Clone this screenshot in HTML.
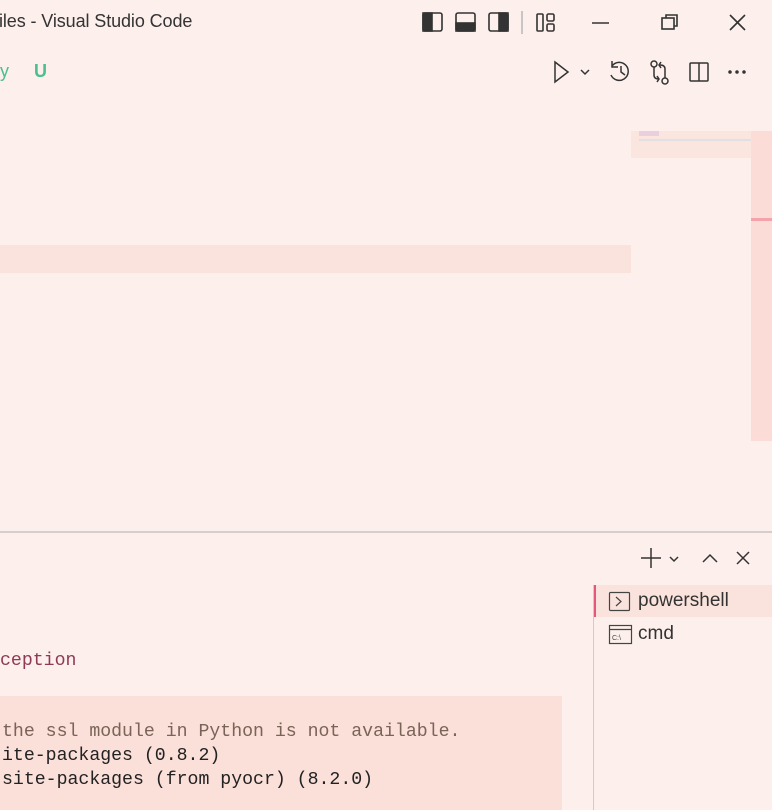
<!DOCTYPE html>
<html><head><style>
body{margin:0;width:772px;height:810px;background:#fdefeb;position:relative;overflow:hidden;font-family:"Segoe UI","Liberation Sans",sans-serif;color:#333}
.a{position:absolute}
.mono{font-family:"Liberation Mono","DejaVu Sans Mono",monospace;font-size:18.2px;white-space:pre}
svg{position:absolute}
</style></head><body>
<div class="a" style="left:-1px;top:11px;font-size:18px;color:#333;letter-spacing:-0.1px">iles - Visual Studio Code</div>
<div class="a" style="left:0;top:61px;font-size:18px;color:#4bbf8f">y</div>
<div class="a" style="left:34px;top:61px;font-size:18px;font-weight:bold;color:#4bbf8f">U</div>
<svg style="left:420px;top:10px" width="352" height="26" fill="none" stroke="#333" stroke-width="1.6">
<rect x="3" y="3" width="19" height="18" rx="2"/><rect x="3" y="3" width="9" height="18" fill="#333"/>
<rect x="36" y="3" width="19" height="18" rx="2"/><rect x="36" y="13" width="19" height="8" fill="#333"/>
<rect x="69" y="3" width="19" height="18" rx="2"/><rect x="79" y="3" width="9" height="18" fill="#333"/>
<line x1="102" y1="1" x2="102" y2="24" stroke="#bbb"/>
<rect x="117" y="4" width="6" height="17" rx="1"/><rect x="127" y="4" width="7" height="7" rx="1.5"/><rect x="127" y="14" width="7" height="7" rx="1.5"/>
<line x1="172" y1="13" x2="189" y2="13"/>
<rect x="242" y="8" width="12" height="11"/><path d="M246 8V5h11v11h-3"/>
<path d="M310 5l15 15M325 5l-15 15"/>
</svg>
<svg style="left:550px;top:58px" width="222" height="28" fill="none" stroke="#333" stroke-width="1.5">
<path d="M5 4l13 10-13 10z"/><path d="M31 12l4 4 4-4"/>
<path d="M62 8a9 9 0 1 1-1 9"/><path d="M62 3v6h6"/><path d="M71 8v6l4 3"/>
<circle cx="104" cy="6" r="3"/><circle cx="115" cy="23" r="3"/><path d="M104 9v8c0 3 2 4 5 4M115 20v-9c0-3-2-4-5-4"/><path d="M111 4l-2 3 2 3M107 18l2 3-2 3"/>
<rect x="140" y="5" width="18" height="18" rx="1"/><line x1="149" y1="5" x2="149" y2="23"/>
<circle cx="180" cy="14" r="1" fill="#333"/><circle cx="187" cy="14" r="1" fill="#333"/><circle cx="194" cy="14" r="1" fill="#333"/>
</svg>
<div class="a" style="left:631px;top:131px;width:120px;height:27px;background:#fbe5df"></div>
<div class="a" style="left:639px;top:139px;width:112px;height:2px;background:#e2dfe3"></div>
<div class="a" style="left:639px;top:131px;width:20px;height:5px;background:#e6c6dd;opacity:.7"></div>
<div class="a" style="left:751px;top:131px;width:21px;height:310px;background:#fbdcd6"></div>
<div class="a" style="left:751px;top:218px;width:21px;height:3px;background:#f4a2ac"></div>
<div class="a" style="left:0;top:245px;width:631px;height:28px;background:#fbe3dd"></div>
<div class="a" style="left:0;top:531px;width:772px;height:2px;background:#d6cdcc"></div>
<svg style="left:636px;top:545px" width="136" height="28" fill="none" stroke="#333" stroke-width="1.5">
<path d="M15 3v20M5 13h20"/><path d="M34 12l4 4 4-4"/><path d="M67 17l7-7 7 7"/><path d="M101 7l12 12M113 7l-12 12"/>
</svg>
<div class="a" style="left:593px;top:585px;width:1px;height:225px;background:#d8c9c6"></div>
<div class="a" style="left:594px;top:585px;width:178px;height:32px;background:#fbe3dd"></div>
<div class="a" style="left:594px;top:585px;width:2px;height:32px;background:#e4577a"></div>
<svg style="left:608px;top:590px" width="28" height="60" fill="none" stroke="#444" stroke-width="1.2">
<rect x="1.5" y="2.5" width="20" height="18" rx="1"/><path d="M8 7l5 4.5-5 4.5"/>
<rect x="1.5" y="35.5" width="22" height="18"/><line x1="1.5" y1="39.5" x2="23.5" y2="39.5"/>
<text x="4" y="50" font-size="7" fill="#444" stroke="none" font-family="Liberation Sans">C:\</text>
</svg>
<div class="a" style="left:638px;top:590px;font-size:19px;color:#333">powershell</div>
<div class="a" style="left:638px;top:623px;font-size:19px;color:#333">cmd</div>
<div class="a mono" style="left:0;top:651px;color:#8f3a55">ception</div>
<div class="a" style="left:0;top:696px;width:562px;height:114px;background:#fbdfd9"></div>
<div class="a mono" style="left:2px;top:722px;color:#7a6357">the ssl module in Python is not available.</div>
<div class="a mono" style="left:2px;top:746px;color:#222">ite-packages (0.8.2)</div>
<div class="a mono" style="left:2px;top:770px;color:#222">site-packages (from pyocr) (8.2.0)</div>
</body></html>
